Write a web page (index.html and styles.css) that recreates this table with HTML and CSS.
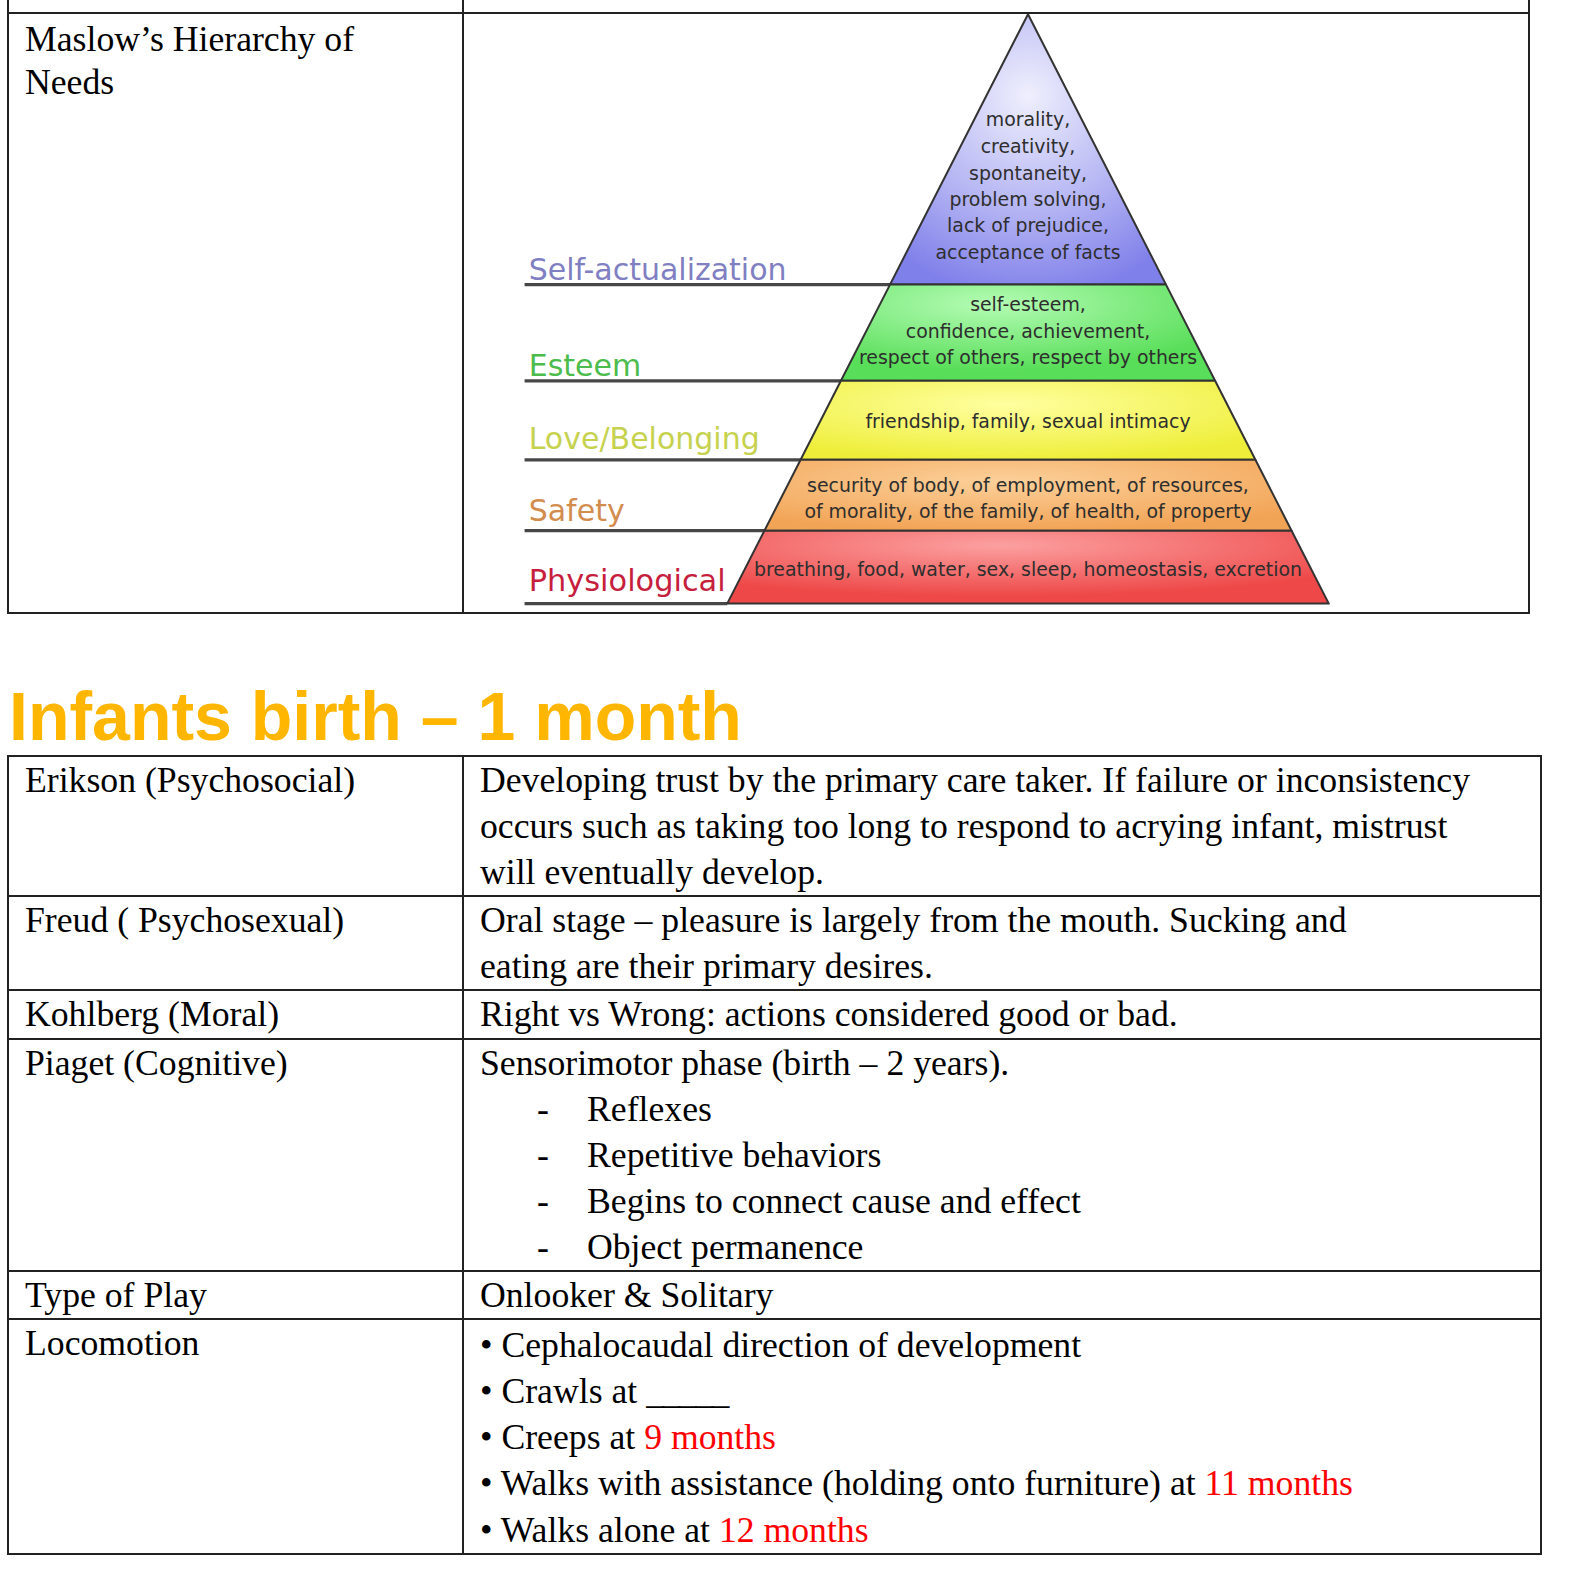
FILE: index.html
```html
<!DOCTYPE html>
<html lang="en">
<head>
<meta charset="utf-8">
<title>Infants birth – 1 month</title>
<link rel="stylesheet" href="styles.css">
</head>
<body>
<div class="page">
  <div class="grid maslow">
    <div class="cell c1 stub"></div>
    <div class="cell c2 stub"></div>
    <div class="cell c1 topic">Maslow’s Hierarchy of<br>Needs</div>
    <div class="cell c2 diagram">
      <svg class="pyramid" width="1064" height="598" viewBox="464 14 1064 598" xmlns="http://www.w3.org/2000/svg">
        <defs>
          <radialGradient id="g-self" cx="0.5" cy="0.3" r="0.75">
            <stop offset="0" stop-color="#efeffd"/>
            <stop offset="0.55" stop-color="#b6b6f4"/>
            <stop offset="1" stop-color="#8080ea"/>
          </radialGradient>
          <radialGradient id="g-esteem" cx="0.4" cy="0.2" r="0.7">
            <stop offset="0" stop-color="#b4fcb4"/>
            <stop offset="1" stop-color="#58de58"/>
          </radialGradient>
          <radialGradient id="g-love" cx="0.45" cy="0.3" r="0.7">
            <stop offset="0" stop-color="#ffffa0"/>
            <stop offset="1" stop-color="#eeee3a"/>
          </radialGradient>
          <radialGradient id="g-safety" cx="0.45" cy="0.3" r="0.7">
            <stop offset="0" stop-color="#fcd09a"/>
            <stop offset="1" stop-color="#f2a456"/>
          </radialGradient>
          <radialGradient id="g-phys" cx="0.45" cy="0.2" r="0.7">
            <stop offset="0" stop-color="#fca0a0"/>
            <stop offset="1" stop-color="#ee4848"/>
          </radialGradient>
        </defs>

        <line class="leader" x1="524.6" y1="284.6" x2="890" y2="284.6"/>
        <line class="leader" x1="524.6" y1="380.8" x2="840.9" y2="380.8"/>
        <line class="leader" x1="524.6" y1="459.8" x2="800.6" y2="459.8"/>
        <line class="leader" x1="524.6" y1="530.7" x2="764.4" y2="530.7"/>
        <line class="leader" x1="524.6" y1="603.6" x2="727.2" y2="603.6"/>

        <polygon class="band" fill="url(#g-self)" points="1028,14.2 1166,284.6 890,284.6"/>
        <polygon class="band" fill="url(#g-esteem)" points="890,284.6 1166,284.6 1215.1,380.8 840.9,380.8"/>
        <polygon class="band" fill="url(#g-love)" points="840.9,380.8 1215.1,380.8 1255.4,459.8 800.6,459.8"/>
        <polygon class="band" fill="url(#g-safety)" points="800.6,459.8 1255.4,459.8 1291.6,530.7 764.4,530.7"/>
        <polygon class="band" fill="url(#g-phys)" points="764.4,530.7 1291.6,530.7 1328.8,603.6 727.2,603.6"/>

        <text class="tier tier-self" x="528.7" y="280">Self-actualization</text>
        <text class="tier tier-esteem" x="528.7" y="375.5">Esteem</text>
        <text class="tier tier-love" x="528.7" y="448.5">Love/Belonging</text>
        <text class="tier tier-safety" x="528.7" y="521">Safety</text>
        <text class="tier tier-phys" x="528.7" y="591" textLength="197" lengthAdjust="spacingAndGlyphs">Physiological</text>

        <text class="note" x="1028" y="126">morality,</text>
        <text class="note" x="1028" y="153.4">creativity,</text>
        <text class="note" x="1028" y="179.7">spontaneity,</text>
        <text class="note" x="1028" y="206">problem solving,</text>
        <text class="note" x="1028" y="232.4">lack of prejudice,</text>
        <text class="note" x="1028" y="258.7">acceptance of facts</text>

        <text class="note" x="1028" y="311.4">self-esteem,</text>
        <text class="note" x="1028" y="337.7">confidence, achievement,</text>
        <text class="note" x="1028" y="364">respect of others, respect by others</text>

        <text class="note" x="1028" y="427.8">friendship, family, sexual intimacy</text>

        <text class="note" x="1028" y="491.6">security of body, of employment, of resources,</text>
        <text class="note" x="1028" y="518">of morality, of the family, of health, of property</text>

        <text class="note" x="1028" y="575.7">breathing, food, water, sex, sleep, homeostasis, excretion</text>
      </svg>
    </div>
  </div>

  <h1 class="stage">Infants birth – 1 month</h1>

  <div class="grid stages">
    <div class="cell c1">Erikson (Psychosocial)</div>
    <div class="cell c2">Developing trust by the primary care taker. If failure or inconsistency<br>occurs such as taking too long to respond to acrying infant, mistrust<br>will eventually develop.</div>

    <div class="cell c1">Freud ( Psychosexual)</div>
    <div class="cell c2">Oral stage – pleasure is largely from the mouth. Sucking and<br>eating are their primary desires.</div>

    <div class="cell c1">Kohlberg (Moral)</div>
    <div class="cell c2">Right vs Wrong: actions considered good or bad.</div>

    <div class="cell c1">Piaget (Cognitive)</div>
    <div class="cell c2">
      <div>Sensorimotor phase (birth – 2 years).</div>
      <ul class="dash-list">
        <li><span class="dash">-</span>Reflexes</li>
        <li><span class="dash">-</span>Repetitive behaviors</li>
        <li><span class="dash">-</span>Begins to connect cause and effect</li>
        <li><span class="dash">-</span>Object permanence</li>
      </ul>
    </div>

    <div class="cell c1">Type of Play</div>
    <div class="cell c2">Onlooker &amp; Solitary</div>

    <div class="cell c1">Locomotion</div>
    <div class="cell c2 loco">
      <ul class="bullets">
        <li>• Cephalocaudal direction of development</li>
        <li>• Crawls at <span class="blank">_____</span></li>
        <li>• Creeps at <span class="hl">9 months</span></li>
        <li>• Walks with assistance (holding onto furniture) at <span class="hl">11 months</span></li>
        <li>• Walks alone at <span class="hl">12 months</span></li>
      </ul>
    </div>
  </div>
</div>
</body>
</html>
```

FILE: styles.css
```css
html, body {
  margin: 0;
  padding: 0;
  background: #ffffff;
}

body {
  color: #000000;
  font-family: "Liberation Serif", "Times New Roman", serif;
  font-size: 35.7px;
}

.page {
  padding-left: 7px;
}

.grid {
  display: grid;
  width: max-content;
  border-left: 2px solid #222222;
}

.cell {
  border-right: 2px solid #222222;
  border-bottom: 2px solid #222222;
  padding: 0 10px 0 16px;
}

/* Maslow table */
.maslow {
  grid-template-columns: 455px 1066px;
  line-height: 42.5px;
}

.stub {
  height: 12px;
  padding: 0;
}

.topic {
  padding-top: 4px;
}

.diagram {
  padding: 0;
}

.pyramid {
  display: block;
}

.leader {
  stroke: #474747;
  stroke-width: 3.2;
}

.band {
  stroke: #333333;
  stroke-width: 2;
  stroke-linejoin: round;
}

.tier {
  font-family: "DejaVu Sans", "Verdana", sans-serif;
  font-size: 30px;
}

.tier-self { fill: #7f7fc2; }
.tier-esteem { fill: #4cbc4c; }
.tier-love { fill: #c6d24e; }
.tier-safety { fill: #d28c4e; }
.tier-phys { fill: #c61e3c; }

.note {
  font-family: "DejaVu Sans", "Verdana", sans-serif;
  font-size: 18.9px;
  fill: #2e2e2e;
  text-anchor: middle;
}

/* Heading */
.stage {
  margin: 63px 0 0 2px;
  font-family: "Liberation Sans", Arial, sans-serif;
  font-weight: bold;
  font-size: 68px;
  line-height: 78px;
  color: #ffb600;
}

/* Stages table */
.stages {
  grid-template-columns: 455px 1078px;
  border-top: 2px solid #222222;
  line-height: 46.1px;
}

.loco {
  padding-top: 2px;
}

.dash-list,
.bullets {
  list-style: none;
  margin: 0;
  padding: 0;
}

.dash-list {
  padding-left: 57px;
}

.dash-list li {
  display: flex;
}

.dash {
  width: 50px;
  flex: none;
}

.blank {
  letter-spacing: -1.5px;
}

.hl {
  color: #ff0000;
}
```
